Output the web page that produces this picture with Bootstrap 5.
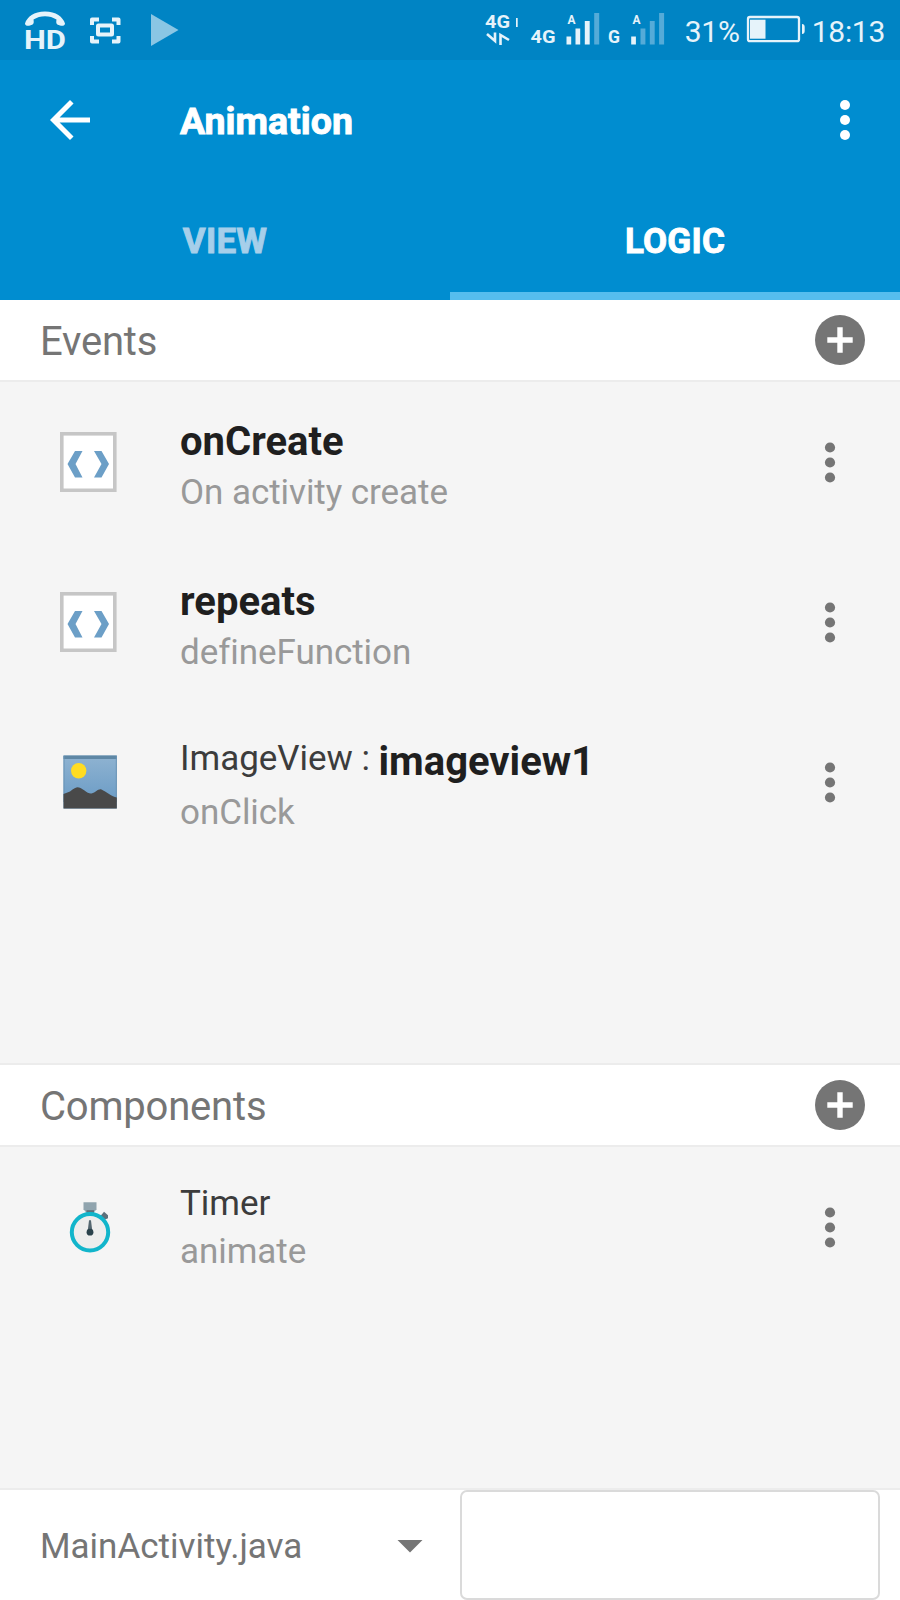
<!DOCTYPE html>
<html lang="en">
<head>
<meta charset="utf-8">
<meta name="viewport" content="width=device-width, initial-scale=1">
<title>Animation</title>
<link rel="stylesheet" href="https://cdn.jsdelivr.net/npm/bootstrap@5.3.0/dist/css/bootstrap.min.css">
<style>
  body { font-family: Roboto, "Noto Sans", sans-serif; font-size: 35px; line-height: 41px; color: #757575; background: #f5f5f5; }
  svg { display: block; flex: none; }
  .screen { width: 900px; height: 1600px; overflow: hidden; }
  .status-bar { height: 60px; background: #0084c4; color: #e6f3fa; font-size: 30px; line-height: 36px; padding: 0 15px 0 24px; }
  .battery-level { margin: 3px 0 0 18px; letter-spacing: -.2px; }
  .clock { margin: 3px 0 0 6px; letter-spacing: -.3px; }
  .toolbar { height: 120px; background: #008dd0; padding: 0 25px 0 40px; }
  .toolbar h1 { font-size: 37.5px; line-height: 44px; margin: 2px 0 0 80px; font-weight: 700; -webkit-text-stroke: .9px currentColor; }
  .tab-row { height: 120px; background: #008dd0; --bs-nav-link-padding-x: 0; --bs-nav-link-padding-y: 0; }
  .tab-row .nav-link { height: 120px; font-weight: 700; color: #a6cfea; border-bottom: 8px solid transparent; padding-top: 11px; border-radius: 0; }
  .tab-row .nav-link span { -webkit-text-stroke: .9px currentColor; letter-spacing: .25px; }
  .tab-row .nav-link.active { color: #fff; border-color: #56bdee; }
  .section-head { height: 80px; padding: 0 30px 0 40px; background: #fff; }
  .section-head h2 { font-size: 40px; line-height: 47px; margin: 2px 0 0; font-weight: 400; letter-spacing: -.2px; }
  .item-list { border-top: 2.5px solid #ececec; border-bottom: 2.5px solid #ececec; }
  .events { height: 685px; }
  .components { height: 345px; }
  .item { height: 160px; padding: 0 50px 0 60px; }
  .item-icon { width: 120px; }
  .item-text { padding-top: 36px; }
  .item-name { font-size: 40px; line-height: 47px; font-weight: 700; color: #1f1f1f; }
  .item-kind { color: #3c3c3c; letter-spacing: -.04px; }
  .item-note { color: #999; margin-top: 7px; letter-spacing: -.06px; }
  .bottom-bar { height: 110px; background: #fff; padding-right: 20px; }
  .file-picker { width: 460px; padding: 2px 35px 0 40px; }
  .entry { height: 110px; border: 2px solid #dadada; border-radius: 7px; background: #fff; }
</style>
</head>
<body>
<main class="screen d-flex flex-column">
  <div class="status-bar d-flex align-items-center">
    <svg width="42" height="60" viewBox="24 0 42 60">
      <path d="M25 23.500C27 17 34 11.500 45 11.500S63 17 65 23.500C65 26 62 26 60 25.500C56 24.500 56 23 56.500 19.500C50 15 40 15 33.500 19.500C34 23 34 24.500 30 25.500C28 26 25 26 25 23.500Z" fill="#e6f3fa"/>
      <text x="24" y="48.700" font-size="26" font-weight="700" textLength="42" lengthAdjust="spacingAndGlyphs" fill="#e6f3fa">HD</text>
    </svg>
    <svg width="32" height="60" viewBox="90 0 32 60" style="margin-left:24px" fill="none" stroke="#e6f3fa" stroke-width="4">
      <path d="M92 25V19.500H99M112 19.500H118.500V25M118.500 36V41.500H112M99 41.500H92V36" stroke-linejoin="round"/>
      <rect x="98" y="25.500" width="14" height="9" rx=".5"/>
    </svg>
    <svg width="30" height="60" viewBox="151 0 30 60" style="margin-left:28px"><path d="M152 14L179.500 30L152 46Z" fill="#8ac6e4"/></svg>
    <svg width="182" height="60" viewBox="484.500 0 182 60" class="ms-auto" fill="#e6f3fa" font-weight="700">
      <text x="484.500" y="28" font-size="18.500" textLength="25" lengthAdjust="spacingAndGlyphs">4G</text>
      <rect x="515.500" y="18" width="1.700" height="9"/>
      <path d="M486.500 34L494.500 41V32.500M500 45V35L508.500 40" fill="none" stroke="#e6f3fa" stroke-width="2.600"/>
      <text x="530" y="43" font-size="18.500" textLength="25" lengthAdjust="spacingAndGlyphs">4G</text>
      <text x="567" y="24" font-size="12.500" textLength="8" lengthAdjust="spacingAndGlyphs">A</text>
      <rect x="566" y="36.500" width="4.700" height="8"/>
      <rect x="575" y="28.500" width="4.700" height="16"/>
      <rect x="584.300" y="21" width="4.900" height="23.500"/>
      <rect x="593.700" y="13" width="5" height="31.500" fill="#55abd8"/>
      <text x="607.500" y="43" font-size="18.500" textLength="12" lengthAdjust="spacingAndGlyphs">G</text>
      <text x="632" y="24" font-size="12.500" textLength="8" lengthAdjust="spacingAndGlyphs">A</text>
      <rect x="630.700" y="36.500" width="4.700" height="8"/>
      <g fill="#55abd8">
        <rect x="640" y="28.500" width="4.900" height="16"/>
        <rect x="649.300" y="21" width="4.900" height="23.500"/>
        <rect x="658.600" y="13" width="5" height="31.500"/>
      </g>
    </svg>
    <span class="battery-level">31%</span>
    <svg width="60" height="60" viewBox="745 0 60 60" style="margin-left:6px">
      <rect x="747" y="17" width="51" height="24.200" rx="2" fill="none" stroke="#e6f3fa" stroke-width="2.300"/>
      <rect x="749" y="19.700" width="15.500" height="19" fill="#e6f3fa"/>
      <path d="M801 24Q803.700 24 803.700 27V31Q803.700 34 801 34Z" fill="#e6f3fa"/>
    </svg>
    <span class="clock">18:13</span>
  </div>

  <header class="toolbar d-flex align-items-center text-white">
    <svg width="60" height="60" viewBox="0 0 24 24" fill="#fff"><path d="M20 11H7.830l5.590-5.590L12 4l-8 8 8 8 1.410-1.410L7.830 13H20z"/></svg>
    <h1>Animation</h1>
    <svg width="60" height="60" viewBox="0 0 24 24" class="ms-auto" fill="#fff"><circle cx="12" cy="6" r="2"/><circle cx="12" cy="12" r="2"/><circle cx="12" cy="18" r="2"/></svg>
  </header>
  <nav class="tab-row nav nav-fill flex-nowrap">
    <a class="nav-link w-50 d-flex align-items-center justify-content-center" href="#"><span>VIEW</span></a>
    <a class="nav-link active w-50 d-flex align-items-center justify-content-center" href="#"><span>LOGIC</span></a>
  </nav>

  <div class="section-head d-flex align-items-center justify-content-between">
    <h2>Events</h2>
    <svg width="60" height="60" viewBox="0 0 60 60"><circle cx="30" cy="30" r="25" fill="#757575"/><path d="M17.300 30H42.700M30 17.300V42.700" stroke="#fff" stroke-width="5.400"/></svg>
  </div>
  <section class="item-list events">
    <div class="item d-flex">
      <div class="item-icon d-flex align-items-center">
        <svg width="57" height="60" viewBox="0 0 57 60"><rect x="1.800" y="1.800" width="53" height="56.500" fill="#fff" stroke="#c6c6c6" stroke-width="3.600"/><path d="M15 19H22.500L15.500 32L22.500 45.500H15L7.500 32ZM34 19H41.500L49 32L41.500 45.500H34L41.500 32Z" fill="#6c9fc7"/></svg>
      </div>
      <div class="item-text flex-grow-1">
        <div class="item-name">onCreate</div>
        <div class="item-note">On activity create</div>
      </div>
      <svg width="40" height="60" viewBox="0 0 40 60" class="align-self-center" fill="#757575"><circle cx="20" cy="15.500" r="5.100"/><circle cx="20" cy="30.500" r="5.100"/><circle cx="20" cy="45.500" r="5.100"/></svg>
    </div>
    <div class="item d-flex">
      <div class="item-icon d-flex align-items-center">
        <svg width="57" height="60" viewBox="0 0 57 60"><rect x="1.800" y="1.800" width="53" height="56.500" fill="#fff" stroke="#c6c6c6" stroke-width="3.600"/><path d="M15 19H22.500L15.500 32L22.500 45.500H15L7.500 32ZM34 19H41.500L49 32L41.500 45.500H34L41.500 32Z" fill="#6c9fc7"/></svg>
      </div>
      <div class="item-text flex-grow-1">
        <div class="item-name">repeats</div>
        <div class="item-note">defineFunction</div>
      </div>
      <svg width="40" height="60" viewBox="0 0 40 60" class="align-self-center" fill="#757575"><circle cx="20" cy="15.500" r="5.100"/><circle cx="20" cy="30.500" r="5.100"/><circle cx="20" cy="45.500" r="5.100"/></svg>
    </div>
    <div class="item d-flex">
      <div class="item-icon d-flex align-items-center">
        <svg width="60" height="60" viewBox="0 0 60 60">
          <defs><linearGradient id="sky" x2="0" y2="1"><stop stop-color="#8fb3d1"/><stop offset="1" stop-color="#6699c4"/></linearGradient></defs>
          <rect x="3.500" y="3.500" width="53.300" height="53" fill="url(#sky)"/>
          <path d="M3.500 5.200H56.800" stroke="#5e87a5" stroke-width="3.500"/>
          <path d="M4 4V50M56.300 4V50" stroke="#6893b5" stroke-width="1"/>
          <circle cx="18.700" cy="18.800" r="7.700" fill="#ffdc22"/>
          <path d="M3.500 42L10 39.500Q16.500 34.500 18.700 35.500C22 35.500 28 42.500 31.500 41.500C36 40.500 38 36.500 41.500 37.500C46 39.500 52 45 56.800 45.500V56.500H3.500Z" fill="#494949"/>
        </svg>
      </div>
      <div class="item-text flex-grow-1">
        <div class="d-flex"><span class="item-kind">ImageView :&nbsp;</span><span class="item-name">imageview1</span></div>
        <div class="item-note">onClick</div>
      </div>
      <svg width="40" height="60" viewBox="0 0 40 60" class="align-self-center" fill="#757575"><circle cx="20" cy="15.500" r="5.100"/><circle cx="20" cy="30.500" r="5.100"/><circle cx="20" cy="45.500" r="5.100"/></svg>
    </div>
  </section>

  <div class="section-head d-flex align-items-center justify-content-between">
    <h2>Components</h2>
    <svg width="60" height="60" viewBox="0 0 60 60"><circle cx="30" cy="30" r="25" fill="#757575"/><path d="M17.300 30H42.700M30 17.300V42.700" stroke="#fff" stroke-width="5.400"/></svg>
  </div>
  <section class="item-list components">
    <div class="item d-flex">
      <div class="item-icon d-flex align-items-center">
        <svg width="60" height="60" viewBox="0 -10.200 60 60">
          <path d="M39.500 10L44 4.500L48 8V11L44.500 12.500Z" fill="#5d707b"/>
          <path d="M23.500 -5H36.500V2L34 5H26L23.500 2Z" fill="#90a4ae"/>
          <rect x="26.500" y="3" width="7.500" height="4" fill="#5d707b"/>
          <circle cx="30" cy="25" r="18.200" fill="#ededed" stroke="#12b5cb" stroke-width="4"/>
          <path d="M29 13H31L32.300 24H27.700Z" fill="#546670"/>
          <circle cx="30" cy="25" r="3.400" fill="#2b424c"/>
        </svg>
      </div>
      <div class="item-text flex-grow-1">
        <div class="item-kind">Timer</div>
        <div class="item-note">animate</div>
      </div>
      <svg width="40" height="60" viewBox="0 0 40 60" class="align-self-center" fill="#757575"><circle cx="20" cy="15.500" r="5.100"/><circle cx="20" cy="30.500" r="5.100"/><circle cx="20" cy="45.500" r="5.100"/></svg>
    </div>
  </section>

  <footer class="bottom-bar d-flex">
    <div class="file-picker d-flex align-items-center justify-content-between">
      <span>MainActivity.java</span>
      <svg width="30" height="30" viewBox="0 0 30 30"><path d="M2.500 9H27.500L15 21.500Z" fill="#757575"/></svg>
    </div>
    <div class="entry flex-grow-1"></div>
  </footer>
</main>
<script src="https://cdn.jsdelivr.net/npm/bootstrap@5.3.0/dist/js/bootstrap.bundle.min.js"></script>
</body>
</html>
